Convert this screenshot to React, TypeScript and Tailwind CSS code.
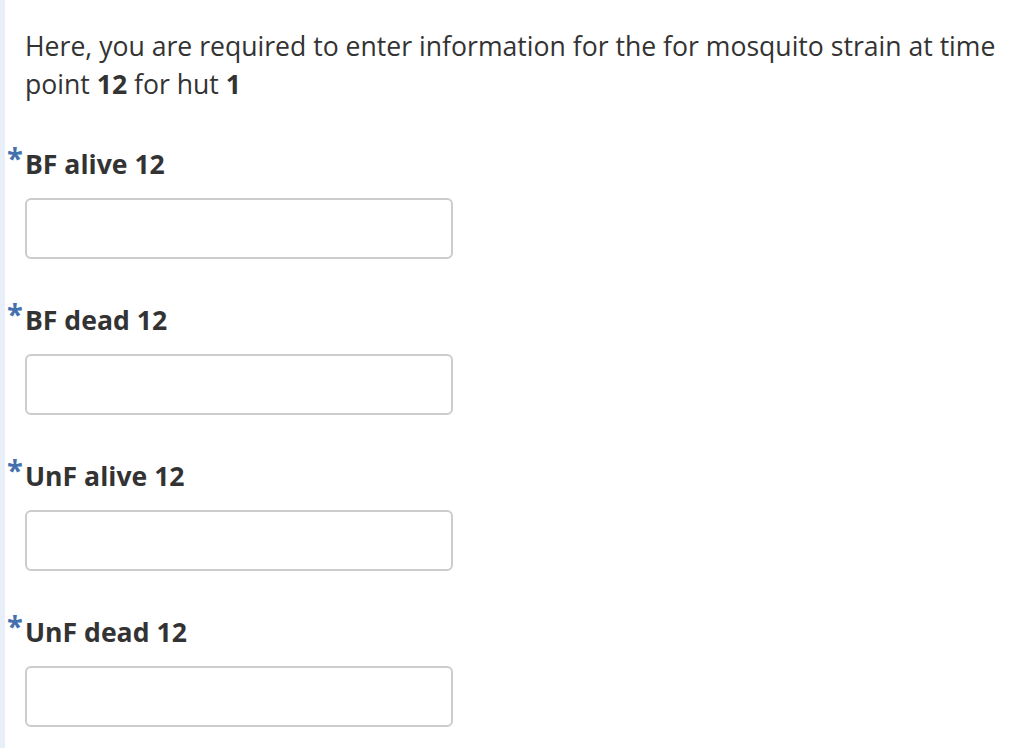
const fields = ["BF alive 12", "BF dead 12", "UnF alive 12", "UnF dead 12"];

export default function App() {
  return (
    <div
      className="flex min-h-[748px] bg-white text-[#333333]"
      style={{ fontFamily: '"Open Sans", sans-serif' }}
    >
      <div className="w-[5px] shrink-0 bg-[#e9eff8]" />
      <div className="flex-1 pl-5 pt-[27px]">
        <p className="text-[26.6px] leading-[38px] pr-2">
          Here, you are required to enter information for the for mosquito strain at time point{" "}
          <b>12</b> for hut <b>1</b>
        </p>
        <div className="mt-[43px] flex flex-col gap-[43px]">
          {fields.map((f) => (
            <div key={f} className="relative">
              <span className="absolute -left-[18px] -top-[3px] text-[29px] font-bold text-[#4470ad] leading-none">
                *
              </span>
              <label className="block text-[26.6px] font-bold leading-[36px]">{f}</label>
              <input
                type="text"
                className="mt-[16px] block h-[61px] w-[428px] rounded-[6px] border-2 border-[#cccccc] bg-white"
              />
            </div>
          ))}
        </div>
      </div>
    </div>
  );
}
